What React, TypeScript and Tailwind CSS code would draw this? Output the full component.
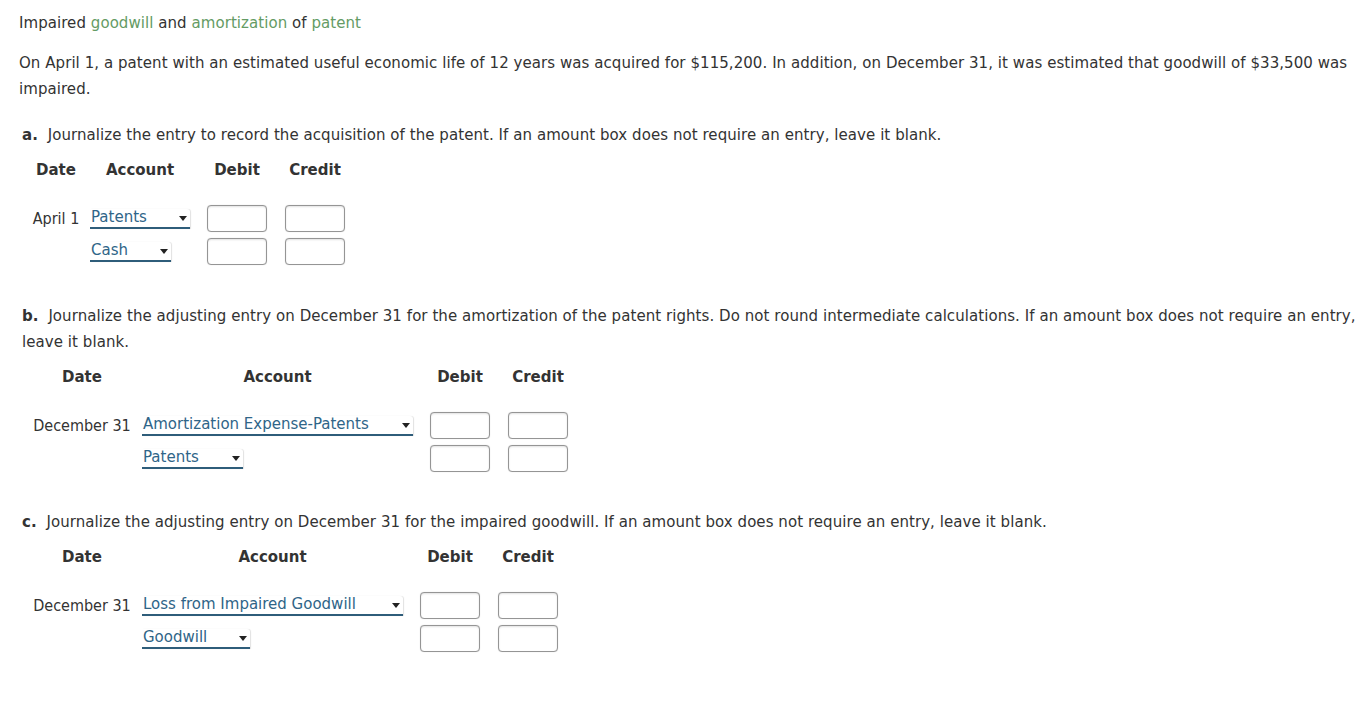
import React from 'react';

// Journal entry exercise: impaired goodwill and patent amortization

type Line = { account: string; width: number };
type Entry = { date: string; lines: Line[] };

const FONT = "font-['DejaVu_Sans',Verdana,sans-serif]";

function AccountSelect({ label, width }: { label: string; width: number }) {
  return (
    <div
      className="relative flex h-[20px] items-center border-b-2 border-[#2e5d7a] rounded-tr-[3px] shadow-[1px_0_1px_rgba(0,0,0,0.12)] bg-white"
      style={{ width }}
    >
      <span className="pl-[1px] text-[15px] leading-none text-[#2f6588] whitespace-nowrap">{label}</span>
      <svg className="absolute right-[3px] top-[7px]" width="8" height="5" viewBox="0 0 8 5">
        <path d="M0 0h8L4 5z" fill="#222" />
      </svg>
    </div>
  );
}

function AmountBox() {
  return (
    <div className="mx-auto h-[27px] w-[60px] rounded-[4px] border border-[#959595] bg-white shadow-[inset_0_1px_2px_rgba(0,0,0,0.12),0_0_1px_rgba(0,0,0,0.2)]" />
  );
}

function JournalTable({ dateCol, accountCol, entry }: { dateCol: number; accountCol: number; entry: Entry }) {
  const cols = `${dateCol}px ${accountCol}px 84px 72px`;
  return (
    <div className="ml-[5px] mt-[9px]">
      <div className="grid h-[26px] items-center text-[15px] font-bold text-[#333]" style={{ gridTemplateColumns: cols }}>
        <div className="text-center">Date</div>
        <div className="text-center">Account</div>
        <div className="text-center">Debit</div>
        <div className="text-center">Credit</div>
      </div>
      <div className="mt-[22px] flex flex-col gap-[6px]">
        {entry.lines.map((line, i) => (
          <div key={i} className="grid h-[27px] items-center" style={{ gridTemplateColumns: cols }}>
            <div className="text-center text-[16px] text-[#333] font-['DejaVu_Sans_Condensed','DejaVu_Sans',sans-serif]">
              {i === 0 ? entry.date : ''}
            </div>
            <div className="pl-[5px]">
              <AccountSelect label={line.account} width={line.width} />
            </div>
            <AmountBox />
            <AmountBox />
          </div>
        ))}
      </div>
    </div>
  );
}

export default function App() {
  return (
    <div className={`${FONT} min-h-[702px] bg-white pl-[19px] pr-[10px] pt-[10px] text-[15px] leading-[26px] text-[#333]`}>
      <p className="tracking-[0.06px]">
        Impaired <span className="text-[#649b64]">goodwill</span> and{' '}
        <span className="text-[#649b64]">amortization</span> of <span className="text-[#649b64]">patent</span>
      </p>
      <p className="mt-[14px] tracking-[0.06px]">
        On April 1, a patent with an estimated useful economic life of 12 years was acquired for $115,200. In addition,
        on December 31, it was estimated that goodwill of $33,500 was impaired.
      </p>

      {/* Part a */}
      <div className="mt-[20px] pl-[3px]">
        <p className="tracking-[0.06px]">
          <b className="mr-[5px]">a.</b> Journalize the entry to record the acquisition of the patent. If an amount box
          does not require an entry, leave it blank.
        </p>
        <JournalTable
          dateCol={58}
          accountCol={110}
          entry={{
            date: 'April 1',
            lines: [
              { account: 'Patents', width: 100 },
              { account: 'Cash', width: 81 },
            ],
          }}
        />
      </div>

      {/* Part b */}
      <div className="mt-[38px] pl-[3px]">
        <p className="tracking-[0.06px]">
          <b className="mr-[5px]">b.</b> Journalize the adjusting entry on December 31 for the amortization of the patent
          rights. Do not round intermediate calculations. If an amount box does not require an entry, leave it blank.
        </p>
        <JournalTable
          dateCol={110}
          accountCol={281}
          entry={{
            date: 'December 31',
            lines: [
              { account: 'Amortization Expense-Patents', width: 271 },
              { account: 'Patents', width: 101 },
            ],
          }}
        />
      </div>

      {/* Part c */}
      <div className="mt-[37px] pl-[3px]">
        <p className="tracking-[0.06px]">
          <b className="mr-[5px]">c.</b> Journalize the adjusting entry on December 31 for the impaired goodwill. If an
          amount box does not require an entry, leave it blank.
        </p>
        <JournalTable
          dateCol={110}
          accountCol={271}
          entry={{
            date: 'December 31',
            lines: [
              { account: 'Loss from Impaired Goodwill', width: 261 },
              { account: 'Goodwill', width: 108 },
            ],
          }}
        />
      </div>
    </div>
  );
}
